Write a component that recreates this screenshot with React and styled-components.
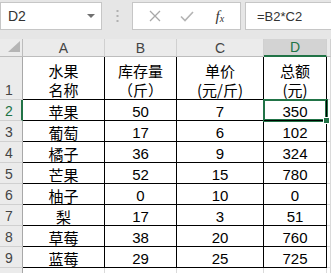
import React from 'react';
import styled, { createGlobalStyle, css } from 'styled-components';

const GREEN = '#217346';

const COLUMNS = ['A', 'B', 'C', 'D'];

const FRUIT_ROWS = [
  ['苹果', 50, 7, 350],
  ['葡萄', 17, 6, 102],
  ['橘子', 36, 9, 324],
  ['芒果', 52, 15, 780],
  ['柚子', 0, 10, 0],
  ['梨', 17, 3, 51],
  ['草莓', 38, 20, 760],
  ['蓝莓', 29, 25, 725]
];

const HEADER_TEXT = [
  ['水果', '名称'],
  ['库存量', '（斤）'],
  ['单价', '(元/斤)'],
  ['总额', '(元)']
];

function App() {
  return (
      <>
        <GlobalStyle />
        <Page>
          <FormulaBar>
            <NameBox>
              <span>D2</span>
              <Caret />
            </NameBox>
            <Grip>
              <svg width="3" height="12" viewBox="0 0 3 12">
                <rect x="0.5" y="0" width="2" height="2" fill="#b0b0b0" />
                <rect x="0.5" y="5" width="2" height="2" fill="#b0b0b0" />
                <rect x="0.5" y="10" width="2" height="2" fill="#b0b0b0" />
              </svg>
            </Grip>
            <ActionBox>
              <IconBtn>
                <svg width="12" height="12" viewBox="0 0 12 12">
                  <path d="M1 1 L11 11 M11 1 L1 11" stroke="#a8a8a8" strokeWidth="1.3" fill="none" />
                </svg>
              </IconBtn>
              <IconBtn>
                <svg width="14" height="11" viewBox="0 0 14 11">
                  <path d="M1 5.5 L5 9.5 L13 1" stroke="#b4b4b4" strokeWidth="1.6" fill="none" />
                </svg>
              </IconBtn>
              <FxLabel>f<sub>x</sub></FxLabel>
            </ActionBox>
            <FormulaInput>=B2*C2</FormulaInput>
          </FormulaBar>

          <Sheet>
            <Corner>
              <svg width="12" height="11" viewBox="0 0 12 11">
                <polygon points="12,0 12,11 0,11" fill="#b5b5b5" />
              </svg>
            </Corner>
            { COLUMNS.map((col) => (
                <ColHead key={ col } $selected={ col === 'D' }>{ col }</ColHead>
            )) }
            <ColHead />

            <RowHead>1</RowHead>
            { HEADER_TEXT.map((lines, idx) => (
                <Cell key={ `h-${ idx }` } $cjk>
                  <Lines>{ lines.map((l) => <span key={ l }>{ l }</span>) }</Lines>
                </Cell>
            )) }
            <Cell $ext />

            { FRUIT_ROWS.map((row, rIdx) => (
                <React.Fragment key={ `r-${ rIdx }` }>
                  <RowHead $selected={ rIdx === 0 }>{ rIdx + 2 }</RowHead>
                  { row.map((value, cIdx) => (
                      <Cell
                          key={ `c-${ rIdx }-${ cIdx }` }
                          $cjk={ cIdx === 0 }
                          $selected={ rIdx === 0 && cIdx === 3 }
                      >
                        { value }
                        { rIdx === 0 && cIdx === 3 && <FillHandle /> }
                      </Cell>
                  )) }
                  <Cell $ext />
                </React.Fragment>
            )) }

            {/* row 10 only peeks in at the bottom edge */ }
            <RowHead />
            { COLUMNS.map((col) => <Cell key={ `e-${ col }` } $ext />) }
            <Cell $ext />
          </Sheet>
        </Page>
      </>
  );
}

const GlobalStyle = createGlobalStyle`
  html, body {
    margin: 0;
    padding: 0;
    background: #fff;
    overflow: hidden;
  }`;

const Page = styled.div`
  width: 331px;
  height: 273px;
  overflow: hidden;
  font-family: "Liberation Sans", Arial, sans-serif;`;

const FormulaBar = styled.div`
  height: 39px;
  box-sizing: border-box;
  padding-top: 2px;
  display: flex;
  align-items: flex-start;
  background: #e6e6e6;`;

const boxStyle = css`
  height: 28px;
  box-sizing: border-box;
  background: #fff;
  border: 1px solid #c6c6c6;`;

const NameBox = styled.div`
  ${ boxStyle };
  width: 102px;
  display: flex;
  align-items: center;
  justify-content: space-between;
  padding: 0 6px 0 7px;
  font-size: 14px;
  color: #333;`;

const Caret = styled.span`
  width: 0;
  height: 0;
  border-left: 4px solid transparent;
  border-right: 4px solid transparent;
  border-top: 4px solid #707070;`;

const Grip = styled.div`
  width: 30px;
  height: 28px;
  display: flex;
  align-items: center;
  justify-content: center;`;

const ActionBox = styled.div`
  ${ boxStyle };
  width: 109px;
  display: flex;
  align-items: center;
  justify-content: space-around;
  padding: 0 4px 0 6px;
  margin-right: 4px;`;

const IconBtn = styled.div`
  width: 24px;
  display: flex;
  justify-content: center;`;

const FxLabel = styled.div`
  width: 24px;
  text-align: center;
  font-family: "Liberation Serif", serif;
  font-style: italic;
  font-size: 15px;
  color: #333;
  sub {
    font-size: 10px;
    vertical-align: baseline;
    position: relative;
    top: 1px;
  }`;

const FormulaInput = styled.div`
  ${ boxStyle };
  flex: 1;
  border-right: none;
  display: flex;
  align-items: center;
  padding-left: 11px;
  font-size: 13px;
  color: #333;`;

const Sheet = styled.div`
  display: grid;
  grid-template-columns: 23px 82px 72px 87px 63px 1fr;
  grid-template-rows: 18px 43px repeat(9, 21px);
  font-size: 15px;`;

const headStyle = css`
  box-sizing: border-box;
  background: #ebebeb;
  color: #444;
  font-size: 14px;
  display: flex;`;

const Corner = styled.div`
  ${ headStyle };
  border-right: 1px solid #bdbdbd;
  border-bottom: 1px solid #bdbdbd;
  align-items: flex-end;
  justify-content: flex-end;
  padding: 0 2px 4px 0;`;

const ColHead = styled.div`
  ${ headStyle };
  align-items: center;
  justify-content: center;
  border-right: 1px solid #d0d0d0;
  border-bottom: 1px solid #bdbdbd;
  ${ ({ $selected }) => $selected && css`
    background: #d3d3d3;
    color: ${ GREEN };
    border-bottom: 2px solid ${ GREEN };
  ` }`;

const RowHead = styled.div`
  ${ headStyle };
  align-items: flex-end;
  padding: 0 0 1px 5px;
  border-right: 1px solid #a8a8a8;
  border-bottom: 1px solid #d0d0d0;
  ${ ({ $selected }) => $selected && css`
    color: ${ GREEN };
    border-right: 2px solid ${ GREEN };
  ` }`;

const Cell = styled.div`
  position: relative;
  box-sizing: border-box;
  display: flex;
  align-items: flex-end;
  justify-content: center;
  line-height: 17px;
  color: #000;
  border-right: 1px solid #000;
  border-bottom: 1px solid #000;
  font-family: ${ ({ $cjk }) => ($cjk ? '"Noto Sans CJK SC", sans-serif' : '"Liberation Sans", Arial, sans-serif') };
  ${ ({ $ext }) => $ext && css`
    border-right: 1px solid #dadada;
    border-bottom: 1px solid #dadada;
  ` }
  ${ ({ $selected }) => $selected && css`
    z-index: 1;
    box-shadow: 0 0 0 1px ${ GREEN }, inset 0 0 0 1px ${ GREEN };
  ` }`;

const Lines = styled.div`
  display: flex;
  flex-direction: column;
  align-items: center;
  line-height: 19px;`;

const FillHandle = styled.span`
  position: absolute;
  right: -4px;
  bottom: -4px;
  width: 5px;
  height: 5px;
  background: ${ GREEN };
  border: 1px solid #fff;`;

export default App;
